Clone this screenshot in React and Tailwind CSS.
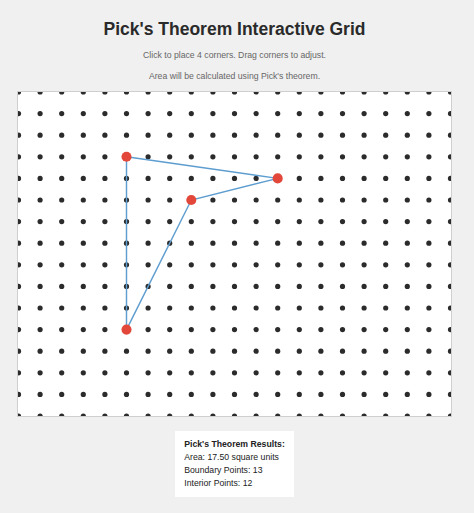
import React from "react";

const COLS = 20;
const ROWS = 15;
const STEP = 30;

// corners in grid units
const corners = [
  [5, 3],
  [12, 4],
  [8, 5],
  [5, 11],
];

const polygonArea = (pts) => {
  let s = 0;
  for (let i = 0; i < pts.length; i++) {
    const [x1, y1] = pts[i];
    const [x2, y2] = pts[(i + 1) % pts.length];
    s += x1 * y2 - x2 * y1;
  }
  return Math.abs(s) / 2;
};

const GridCanvas = () => {
  const dots = [];
  for (let y = 0; y <= ROWS; y++) {
    for (let x = 0; x <= COLS; x++) {
      dots.push(
        <circle key={`${x}-${y}`} cx={x * STEP} cy={y * STEP} r="3.6" fill="#2b2b2b" />
      );
    }
  }
  const pathPoints = corners.map(([x, y]) => `${x * STEP},${y * STEP}`).join(" ");

  return (
    <svg
      width="435"
      height="326"
      viewBox="0 0 600 450"
      className="block bg-white border border-[#cfcfcf]"
    >
      {dots}
      <polygon points={pathPoints} fill="none" stroke="#5d9dd0" strokeWidth="2" />
      {corners.map(([x, y], i) => (
        <circle key={i} cx={x * STEP} cy={y * STEP} r="7" fill="#e2473a" />
      ))}
    </svg>
  );
};

const App = () => {
  const area = polygonArea(corners);

  return (
    <div
      className="min-h-screen bg-[#f0f0f0] flex flex-col items-center pt-[19px] pr-[5px] text-[#333]"
      style={{ fontFamily: '"Liberation Sans", Arial, sans-serif' }}
    >
      <h1 className="text-[17.5px] leading-[20px] font-bold text-[#2a2a2a]">
        Pick's Theorem Interactive Grid
      </h1>
      <p className="mt-[10px] text-[8.7px] leading-[12px] text-[#666]">
        Click to place 4 corners. Drag corners to adjust.
      </p>
      <p className="mt-[9px] text-[8.7px] leading-[12px] text-[#666]">
        Area will be calculated using Pick's theorem.
      </p>

      <div className="mt-[9px]">
        <GridCanvas />
      </div>

      <div className="mt-[14px] bg-white px-[9px] py-[7px] text-[8.7px] leading-[13px] text-[#222]">
        <div className="font-bold">Pick's Theorem Results:</div>
        <div>Area: {area.toFixed(2)} square units</div>
        <div>Boundary Points: 13</div>
        <div>Interior Points: 12</div>
      </div>
    </div>
  );
};

export default App;
